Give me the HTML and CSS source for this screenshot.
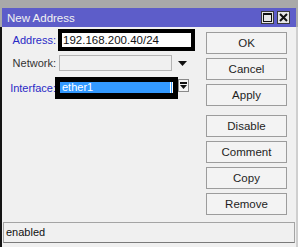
FILE: index.html
```html
<!DOCTYPE html>
<html lang="en">
<head>
    <meta charset="UTF-8" />
    <title>New Address</title>
    <link rel="stylesheet" href="styles.css">
</head>
<body>
    <div class="window">
        <div class="titlebar">
            <span class="title">New Address</span>
            <div class="tb-btns">
                <span class="tb-btn">
                    <svg width="9" height="9" viewBox="0 0 9 9"><rect x="0.5" y="0.5" width="8" height="8" fill="none" stroke="#111" stroke-width="1"/><line x1="0" y1="1.5" x2="9" y2="1.5" stroke="#111" stroke-width="1"/></svg>
                </span>
                <span class="tb-btn">
                    <svg width="9" height="9" viewBox="0 0 9 9"><path d="M1 1 L8 8 M8 1 L1 8" stroke="#111" stroke-width="2"/></svg>
                </span>
            </div>
        </div>
        <div class="client">
            <div class="main">
                <div class="fields">
                    <div class="row row-address">
                        <label class="lbl lbl-blue">Address:</label>
                        <div class="addr-box">192.168.200.40/24</div>
                    </div>
                    <div class="row row-network">
                        <label class="lbl">Network:</label>
                        <div class="net-box"></div>
                        <svg class="net-arrow" width="9" height="5" viewBox="0 0 9 5"><path d="M0 0 L9 0 L4.5 5 Z" fill="#111"/></svg>
                    </div>
                    <div class="row row-iface">
                        <label class="lbl lbl-blue">Interface:</label>
                        <div class="iface-box">
                            <div class="iface-sel">ether1</div>
                            <div class="iface-caret"></div>
                        </div>
                        <span class="drop-btn">
                            <svg width="7" height="7" viewBox="0 0 7 7"><rect x="0" y="0" width="7" height="2" fill="#111"/><path d="M0 3 L7 3 L3.5 7 Z" fill="#111"/></svg>
                        </span>
                    </div>
                </div>
                <div class="actions">
                    <button class="btn">OK</button>
                    <button class="btn">Cancel</button>
                    <button class="btn">Apply</button>
                    <button class="btn btn-gap">Disable</button>
                    <button class="btn">Comment</button>
                    <button class="btn">Copy</button>
                    <button class="btn">Remove</button>
                </div>
            </div>
            <div class="status">enabled</div>
        </div>
    </div>
</body>
</html>
```

FILE: styles.css
```css
body { margin: 0; background: #a9a9a9; font-family: "Liberation Sans", Arial, sans-serif; font-size: 11px; }
.window { width: 298px; height: 247px; padding-top: 8px; box-sizing: border-box; overflow: hidden; display: flex; flex-direction: column; }
.titlebar { height: 19px; margin: 0 2px 0 2px; background: #5d5dc9; display: flex; align-items: center; padding-left: 5px; }
.title { color: #f2f2f2; font-size: 11.5px; flex: 1; }
.tb-btns { display: flex; gap: 3px; margin-right: 6px; }
.tb-btn { width: 13px; height: 13px; box-sizing: border-box; background: #e6e6e6; border: 1px solid #3a3a3a; display: flex; align-items: center; justify-content: center; }
.client { flex: 1; background: #f0f0f0; border-left: 2px solid #141414; border-right: 2px solid #cfcfcf; display: flex; flex-direction: column; }
.main { display: flex; height: 195px; }
.fields { width: 204px; }
.row { display: flex; align-items: center; }
.lbl { width: 54px; text-align: right; color: #333; flex-shrink: 0; }
.lbl-blue { color: #2a2ac6; }
.row-address { height: 22px; margin-top: 2px; }
.addr-box { margin-left: 2px; width: 137px; height: 22px; box-sizing: border-box; border: 4px solid #000; background: #fff; font-size: 11.5px; line-height: 14px; padding-left: 1px; color: #111; }
.row-network { height: 16px; margin-top: 4px; }
.net-box { margin-left: 3px; width: 113px; height: 16px; box-sizing: border-box; border: 1px solid #b4b4b4; background: #f0f0f0; }
.net-arrow { margin-left: 6px; margin-top: 1px; }
.row-iface { height: 22px; margin-top: 6px; }
.iface-box { margin-left: -1px; width: 123px; height: 22px; box-sizing: border-box; background: #000; padding: 5px 0 6px 5px; display: flex; }
.iface-sel { width: 110px; height: 11px; background: #3399ff; color: #fff; line-height: 11px; padding-left: 2px; box-sizing: border-box; }
.iface-caret { width: 3px; height: 11px; box-sizing: border-box; border-left: 1px solid #fff; border-right: 1px solid #fff; background: #3399ff; }
.drop-btn { align-self: flex-start; margin-top: 2px; width: 11px; height: 13px; box-sizing: border-box; background: #f4f4f4; border: 1px solid #8a8a8a; display: flex; align-items: center; justify-content: center; }
.actions { display: flex; flex-direction: column; gap: 4px; padding-top: 5px; }
.btn { width: 81px; height: 22px; margin: 0; padding: 0; border: 1px solid #9c9c9c; background: #f3f3f3; font-family: "Liberation Sans", Arial, sans-serif; font-size: 11.5px; color: #1e1e1e; }
.btn-gap { margin-top: 5px; }
.status { height: 21px; margin: 0 1px 4px 1px; box-sizing: border-box; border: 1px solid #a4a4a4; border-bottom-color: #7a7a7a; padding-left: 2px; line-height: 19px; color: #111; }
```
